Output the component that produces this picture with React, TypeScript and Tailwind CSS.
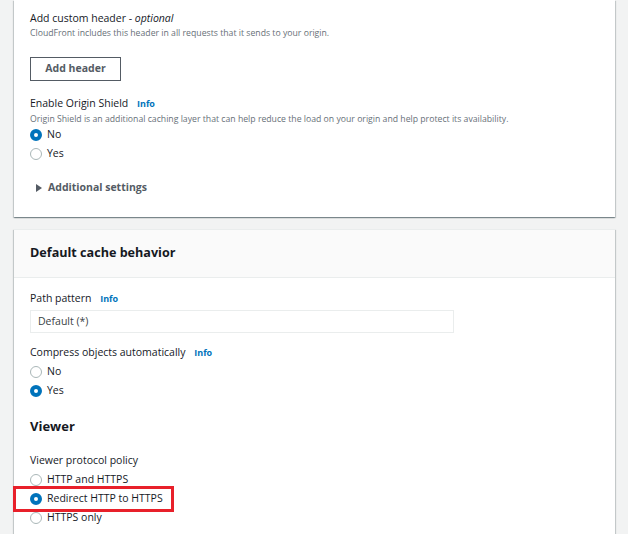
import React from 'react';

const Info = () => (
    <span className="ml-[6px] text-[9px] font-bold text-[#0073bb]">Info</span>
);

const Radio = ({ label, checked }: { label: string; checked?: boolean }) => (
    <div className="flex items-center h-[19px]">
        <span
            className={
                checked
                    ? 'w-[12px] h-[12px] rounded-full border-[4px] border-[#0073bb] bg-white'
                    : 'w-[12px] h-[12px] rounded-full border border-[#aab7b8] bg-white'
            }
        />
        <span className="ml-[5px] text-[10.5px] text-[#16191f]">{label}</span>
    </div>
);

const App: React.FC = () => {
    return (
        <div
            className="w-[628px] h-[534px] overflow-hidden bg-[#f2f3f3] pl-[14px] pr-[13px]"
            style={{ fontFamily: '"Open Sans", "Noto Sans", sans-serif' }}
        >
            {/* origin card (top cut off) */}
            <div className="bg-white shadow-[0_1px_1px_0_rgba(0,28,36,0.3),1px_1px_1px_0_rgba(0,28,36,0.15),-1px_1px_1px_0_rgba(0,28,36,0.15)] px-[16px] pt-[11px] pb-[22px]">
                <div className="text-[10.5px] leading-[15px] text-[#16191f]">
                    Add custom header - <i>optional</i>
                </div>
                <div className="mt-[1px] text-[8.7px] leading-[13px] text-[#687078]">
                    CloudFront includes this header in all requests that it sends to your origin.
                </div>
                <button className="mt-[17px] w-[91px] h-[24px] border border-[#545b64] text-[10.5px] font-bold text-[#545b64] bg-white">
                    Add header
                </button>
                <div className="mt-[15px] text-[10.5px] leading-[15px] text-[#16191f]">
                    Enable Origin Shield <Info />
                </div>
                <div className="mt-[2px] text-[8.7px] leading-[13px] text-[#687078]">
                    Origin Shield is an additional caching layer that can help reduce the load on your origin and help protect its availability.
                </div>
                <div className="mt-[-1px]">
                    <Radio label="No" checked />
                    <Radio label="Yes" />
                </div>
                <div className="mt-[17px] flex items-center h-[15px]">
                    <svg width="8" height="10" viewBox="0 0 8 10" className="ml-[5px]">
                        <path d="M1 1 L7 5 L1 9 Z" fill="#545b64" />
                    </svg>
                    <span className="ml-[5px] text-[10.5px] font-bold text-[#545b64]">Additional settings</span>
                </div>
            </div>

            {/* default cache behavior card */}
            <div className="mt-[12px] bg-white shadow-[0_1px_1px_0_rgba(0,28,36,0.3),1px_1px_1px_0_rgba(0,28,36,0.15),-1px_1px_1px_0_rgba(0,28,36,0.15)] border-t border-[#eaeded]">
                <div className="h-[48px] bg-[#fafafa] border-b border-[#eaeded] px-[16px] flex items-center">
                    <h2 className="text-[12.6px] font-bold text-[#16191f]">Default cache behavior</h2>
                </div>
                <div className="px-[16px] pt-[13px] pb-[20px]">
                    <div className="text-[10.5px] leading-[15px] text-[#16191f]">
                        Path pattern <Info />
                    </div>
                    <div className="mt-[4px] w-[424px] h-[23px] border border-[#eaeded] flex items-center px-[7px] text-[10.5px] text-[#3a3f45]">
                        Default (*)
                    </div>
                    <div className="mt-[12px] text-[10.5px] leading-[15px] text-[#16191f]">
                        Compress objects automatically <Info />
                    </div>
                    <div className="mt-[2px]">
                        <Radio label="No" />
                        <Radio label="Yes" checked />
                    </div>
                    <h3 className="mt-[17px] text-[13px] leading-[18px] font-bold text-[#16191f]">Viewer</h3>
                    <div className="mt-[18px] text-[10.5px] leading-[15px] text-[#16191f]">Viewer protocol policy</div>
                    <div className="mt-[2px]">
                        <Radio label="HTTP and HTTPS" />
                        <div className="relative">
                            <Radio label="Redirect HTTP to HTTPS" checked />
                            <div className="absolute left-[-17px] top-[-3px] w-[161px] h-[26px] border-[3px] border-[#e8202a]" />
                        </div>
                        <Radio label="HTTPS only" />
                    </div>
                </div>
            </div>
        </div>
    );
};

export default App;
